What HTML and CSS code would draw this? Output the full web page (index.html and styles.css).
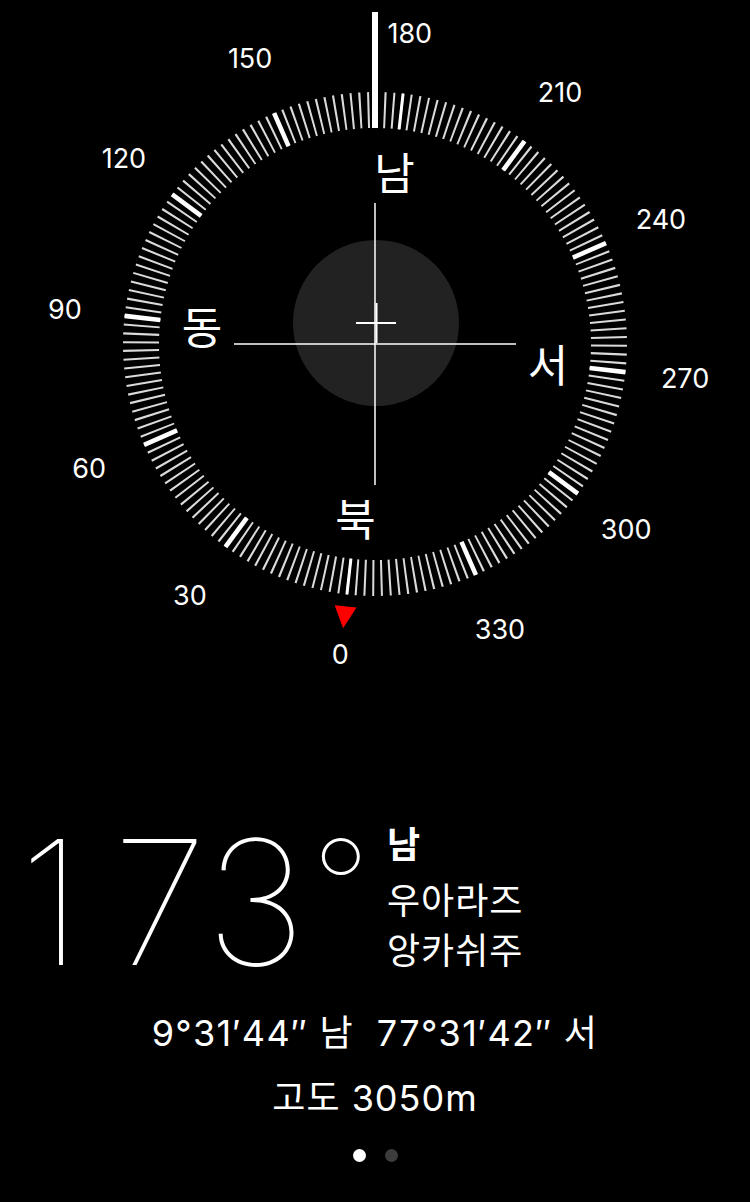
FILE: index.html
```html
<!DOCTYPE html>
<html lang="ko">
<head>
    <meta charset="UTF-8">
    <meta name="viewport" content="width=device-width, initial-scale=1.0">
    <title>나침반</title>
    <link rel="stylesheet" href="styles.css">
</head>
<body>

<!-- dial is rotated to a heading of 173.6 degrees -->
<svg class="dial" viewBox="0 0 750 690" width="750" height="690">
    <g transform="rotate(-173.6 375 344)">
        <circle class="ticks" cx="375" cy="344" r="234" pathLength="360"/>
        <g class="major">
            <line class="cardinal" x1="375" y1="92" x2="375" y2="128"/>
            <line x1="375" y1="92" x2="375" y2="128" transform="rotate(30 375 344)"/>
            <line x1="375" y1="92" x2="375" y2="128" transform="rotate(60 375 344)"/>
            <line x1="375" y1="92" x2="375" y2="128" transform="rotate(90 375 344)"/>
            <line x1="375" y1="92" x2="375" y2="128" transform="rotate(120 375 344)"/>
            <line x1="375" y1="92" x2="375" y2="128" transform="rotate(150 375 344)"/>
            <line class="cardinal" x1="375" y1="92" x2="375" y2="128" transform="rotate(180 375 344)"/>
            <line x1="375" y1="92" x2="375" y2="128" transform="rotate(210 375 344)"/>
            <line x1="375" y1="92" x2="375" y2="128" transform="rotate(240 375 344)"/>
            <line x1="375" y1="92" x2="375" y2="128" transform="rotate(270 375 344)"/>
            <line x1="375" y1="92" x2="375" y2="128" transform="rotate(300 375 344)"/>
            <line x1="375" y1="92" x2="375" y2="128" transform="rotate(330 375 344)"/>
        </g>
        <polygon class="north" points="364,80 386,80 375,58"/>
    </g>

    <rect class="needle" x="372" y="12" width="6" height="116"/>

    <g class="deg">
        <text x="340.2" y="663.6">0</text>
        <text x="189.9" y="604.6">30</text>
        <text x="89.1" y="478.4">60</text>
        <text x="64.9" y="318.7">90</text>
        <text x="123.9" y="168.4">120</text>
        <text x="250.1" y="67.6">150</text>
        <text x="409.8" y="43.4">180</text>
        <text x="560.1" y="102.4">210</text>
        <text x="660.9" y="228.6">240</text>
        <text x="685.1" y="388.3">270</text>
        <text x="626.1" y="538.6">300</text>
        <text x="499.9" y="639.4">330</text>
    </g>

    <g class="card">
        <text x="355.6" y="516.9">북</text>
        <text x="202.1" y="324.6">동</text>
        <text x="394.4" y="171.1">남</text>
        <text x="547.9" y="363.4">서</text>
    </g>

    <circle class="bubble" cx="376" cy="323" r="83"/>
    <g class="cross">
        <line x1="234" y1="344" x2="516" y2="344"/>
        <line x1="375" y1="203" x2="375" y2="485"/>
    </g>
    <g class="level">
        <line x1="356" y1="323" x2="396" y2="323"/>
        <line x1="376.5" y1="303" x2="376.5" y2="343"/>
    </g>
</svg>

<div class="readout">
    <div class="heading"><span class="wide">1</span><span class="tight">7</span>3<span class="sign">°</span></div>
    <div class="place">
        <div class="dir">남</div>
        <div>우아라즈</div>
        <div>앙카쉬주</div>
    </div>
</div>

<p class="coords">9°31′44″ 남&nbsp; 77°31′42″ 서</p>
<p class="alt">고도 3050m</p>

<div class="dots">
    <span class="dot on"></span>
    <span class="dot"></span>
</div>

</body>
</html>
```

FILE: styles.css
```css
:root {
    --bg: #000000;
    --fg: #ffffff;
    --tick: #dadada;
    --bubble: #222222;
    --north: #ff0000;
}

body {
    margin: 0;
    background: var(--bg);
    color: var(--fg);
    font-family: 'Inter', 'Noto Sans CJK KR', sans-serif;
}

.dial {
    display: block;
}

.ticks {
    fill: none;
    stroke: var(--tick);
    stroke-width: 36;
    stroke-dasharray: 0.5 1.5;
    stroke-dashoffset: 0.25;
}

.major line {
    stroke: var(--fg);
    stroke-width: 4.6;
}

.major .cardinal {
    stroke-width: 3;
}

.north {
    fill: var(--north);
}

.needle {
    fill: var(--fg);
}

.deg text {
    fill: var(--fg);
    font-family: 'Inter', sans-serif;
    font-size: 27px;
    text-anchor: middle;
}

.card text {
    fill: var(--fg);
    font-family: 'Noto Sans CJK KR', sans-serif;
    font-size: 44px;
    text-anchor: middle;
    dominant-baseline: central;
}

.bubble {
    fill: var(--bubble);
}

.cross line {
    stroke: var(--fg);
    stroke-width: 1.5;
}

.level line {
    stroke: var(--fg);
    stroke-width: 2;
}

.readout {
    display: flex;
    align-items: flex-start;
    margin-top: 126px;
    padding-left: 19px;
}

.heading {
    font-size: 173px;
    font-weight: 100;
    line-height: 1;
    letter-spacing: 6px;
}

.heading .wide {
    letter-spacing: 30px;
}

.heading .tight {
    letter-spacing: -2px;
}

.heading .sign {
    font-size: 128px;
    vertical-align: 33px;
    letter-spacing: 0;
}

.place {
    margin-left: 17px;
    margin-top: 1px;
    font-family: 'Noto Sans CJK KR', sans-serif;
    font-size: 36px;
    line-height: 50px;
    letter-spacing: 1px;
}

.dir {
    font-weight: 700;
    margin-bottom: 6px;
}

.coords, .alt {
    margin: 0;
    text-align: center;
    font-size: 36px;
    line-height: 43px;
    letter-spacing: 1px;
}

.coords {
    margin-top: 23px;
    letter-spacing: 1.3px;
}

.alt {
    margin-top: 22px;
}

.dots {
    display: flex;
    justify-content: center;
    gap: 19px;
    margin-top: 29px;
}

.dot {
    width: 13px;
    height: 13px;
    border-radius: 50%;
    background: #3c3c3c;
}

.dot.on {
    background: var(--fg);
}
```
